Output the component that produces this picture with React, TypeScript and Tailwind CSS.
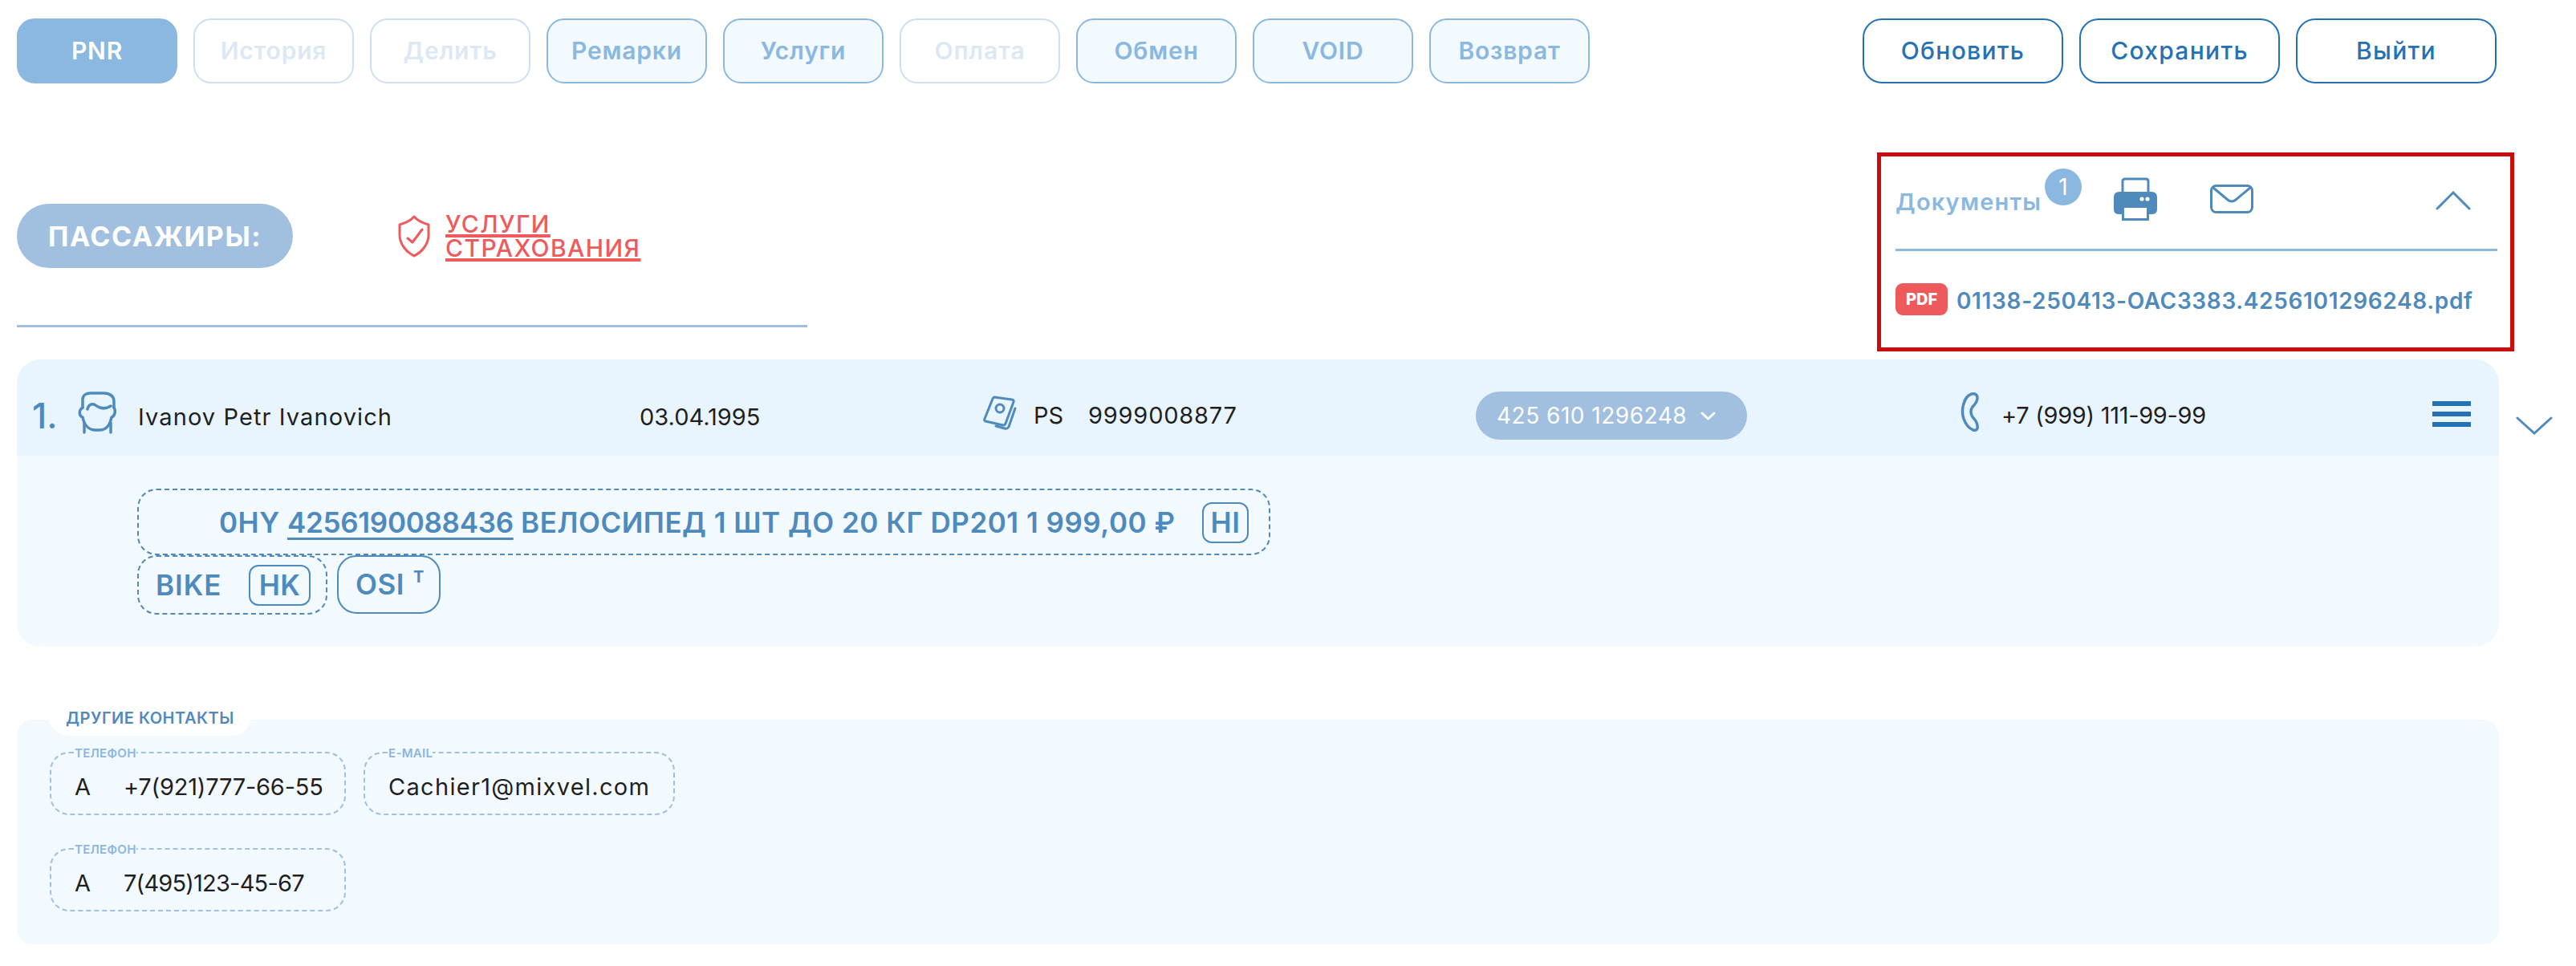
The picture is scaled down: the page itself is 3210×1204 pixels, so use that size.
import React from "react";

const navItems: { label: string; kind: "active" | "off" | "on" }[] = [
  { label: "PNR", kind: "active" },
  { label: "История", kind: "off" },
  { label: "Делить", kind: "off" },
  { label: "Ремарки", kind: "on" },
  { label: "Услуги", kind: "on" },
  { label: "Оплата", kind: "off" },
  { label: "Обмен", kind: "on" },
  { label: "VOID", kind: "on" },
  { label: "Возврат", kind: "on" },
];

function NavButton({ label, kind }: { label: string; kind: "active" | "off" | "on" }) {
  const cls =
    kind === "active"
      ? "bg-[#8bb8e0] border-[#8bb8e0] text-white"
      : kind === "off"
        ? "bg-white border-[#cddff0] text-[#dce9f5]"
        : "bg-[#f2f9ff] border-[#8bb8e0] text-[#8bb8e0]";
  return (
    <div className={`w-[200px] h-[81px] rounded-[22px] border-2 flex items-center justify-center text-[30px] font-semibold tracking-[0.8px] ${cls}`}>
      {label}
    </div>
  );
}

function ActionButton({ label }: { label: string }) {
  return (
    <div className="w-[250px] h-[81px] rounded-[24px] border-2 border-[#2472b5] flex items-center justify-center text-[30px] tracking-[1.3px] font-medium text-[#2472b5] bg-white">
      {label}
    </div>
  );
}

function ContactBox({ label, width, children }: { label: string; width: string; children: React.ReactNode }) {
  return (
    <div className={`relative h-[79px] rounded-[24px] border-2 border-dashed border-[#a1bfdf] flex items-center pl-[29px] pt-[8px] text-[29px] text-[#1f1f1f] ${width}`}>
      <span className="absolute left-[29px] top-[-8px] bg-[#f2f9ff] text-[15px] leading-[16px] tracking-[0.3px] font-semibold text-[#8ab6df]">{label}</span>
      {children}
    </div>
  );
}

export default function App() {
  return (
    <div className="relative w-[3210px] h-[1204px] overflow-hidden bg-white font-['Inter',sans-serif]">
      {/* top bar */}
      <div className="h-[190px] pt-[23px] pl-[21px] pr-[99px] flex items-start justify-between">
        <div className="flex gap-[20px]">
          {navItems.map((n) => (
            <NavButton key={n.label} label={n.label} kind={n.kind} />
          ))}
        </div>
        <div className="flex gap-[20px]">
          <ActionButton label="Обновить" />
          <ActionButton label="Сохранить" />
          <ActionButton label="Выйти" />
        </div>
      </div>

      {/* passengers + documents */}
      <div className="h-[258px] flex items-start pl-[21px] pr-[77px] justify-between">
        <div className="w-[985px] pt-[64px]">
          <div className="flex items-center h-[80px]">
            <div className="w-[344px] h-[80px] rounded-full bg-[#a1bfdf] flex items-center justify-center text-white text-[34px] tracking-[1.5px] font-bold">
              ПАССАЖИРЫ:
            </div>
            <svg className="ml-[131px]" width="40" height="53" viewBox="0 0 40 53" fill="none" stroke="#ef5a5d" strokeWidth="3">
              <path d="M20 2 C15 8 9 10 2 12 V25 C2 36 10 46 20 51 C30 46 38 36 38 25 V12 C31 10 25 8 20 2 Z" strokeLinejoin="round" />
              <path d="M12 29 L18 34 L30 18" strokeLinecap="round" strokeLinejoin="round" />
            </svg>
            <div className="ml-[19px] text-[#ef5a5d] text-[30px] tracking-[1.4px] leading-[30px] font-medium underline underline-offset-[2px] decoration-[4px]">
              УСЛУГИ
              <br />
              СТРАХОВАНИЯ
            </div>
          </div>
          <div className="mt-[71px] h-[3px] bg-[#a1bfdf]" />
        </div>

        <div className="w-[794px] h-[248px] border-[5px] border-[#cc0c0c] pl-[18px] pr-[16px] bg-white">
          <div className="relative h-[118px] border-b-[3px] border-[#8bb8e0]">
            <span className="absolute left-0 top-[37px] text-[29px] tracking-[1.2px] leading-[40px] font-semibold text-[#8bb8e0]">Документы</span>
            <span className="absolute left-[186px] top-[15px] w-[46px] h-[46px] rounded-full bg-[#8bb8e0] flex items-center justify-center text-white text-[28px]">1</span>
            <svg className="absolute left-[272px] top-[26px]" width="54" height="54" viewBox="0 0 54 54">
              <path d="M11 19 V5 Q11 2 14 2 H40 Q43 2 43 5 V19" fill="none" stroke="#4f8abd" strokeWidth="3" />
              <path d="M7 18 H47 Q54 18 54 25 V40 Q54 46 47 46 H43 V36 H11 V46 H7 Q0 46 0 40 V25 Q0 18 7 18 Z" fill="#4f8abd" />
              <rect x="11.5" y="36.5" width="31" height="16" fill="#fff" stroke="#4f8abd" strokeWidth="3" />
              <circle cx="35" cy="27" r="2.6" fill="#fff" />
              <circle cx="42" cy="27" r="2.6" fill="#fff" />
            </svg>
            <svg className="absolute left-[392px] top-[35px]" width="54" height="36" viewBox="0 0 54 36" fill="none" stroke="#4f8abd" strokeWidth="3">
              <rect x="1.5" y="1.5" width="51" height="33" rx="6" />
              <path d="M4 4 L22 19 Q27 23 32 19 L50 4" strokeLinecap="round" />
            </svg>
            <svg className="absolute left-[673px] top-[43px]" width="44" height="24" viewBox="0 0 44 24" fill="none" stroke="#4f8abd" strokeWidth="3">
              <path d="M2 22 L22 2 L42 22" strokeLinecap="round" />
            </svg>
          </div>
          <div className="flex items-center mt-[40px] h-[40px]">
            <span className="w-[65px] h-[40px] rounded-[9px] bg-[#ee5a5c] flex items-center justify-center text-white text-[20px] font-extrabold">PDF</span>
            <span className="ml-[11px] pt-[3px] text-[#4f8abd] text-[28px] tracking-[0.65px] font-semibold whitespace-nowrap">01138-250413-OAC3383.4256101296248.pdf</span>
          </div>
        </div>
      </div>

      {/* passenger card */}
      <div className="flex items-start pl-[21px]">
        <div className="w-[3093px] rounded-[30px] overflow-hidden bg-[#f2f9ff]">
          <div className="h-[120px] bg-[#e8f5ff] flex items-center pl-[19px] pt-[20px] text-[29px] text-[#1f1f1f]">
            <span className="w-[57px] text-[44px] font-medium text-[#4f8abd]">1.</span>
            <span className="w-[75px] -mt-[8px]">
              <svg width="48" height="53" viewBox="0 0 48 53" fill="none" stroke="#4f8abd" strokeWidth="3.5" strokeLinecap="round" strokeLinejoin="round">
                <path d="M6 20 V10 C6 5 10 2 16 2 H32 C40 2 45 6 45 12 V20" />
                <path d="M12 22 C13 17 17 14 22 17 C27 21 33 23 41 18" />
                <path d="M6 20 C1 23 1 30 6 32 C8 42 14 48 22 48 H27 C35 48 40 42 42 32 C47 30 47 23 45 20" />
                <path d="M8 39 V51 M41 39 V51" />
              </svg>
            </span>
            <span className="w-[625px] pt-[3px] tracking-[1.1px]">Ivanov Petr Ivanovich</span>
            <span className="w-[428px] pt-[3px]">03.04.1995</span>
            <span className="w-[63px] -mt-[8px]">
              <svg width="42" height="43" viewBox="0 0 42 43" fill="none" stroke="#4f8abd" strokeWidth="3" strokeLinecap="round" strokeLinejoin="round">
                <path d="M14 2 L36 5 Q39 6 38 8 L28 35 Q27 37 25 37 L3 32 Q1 31 2 29 L12 4 Q13 2 14 2 Z" />
                <circle cx="21" cy="16" r="5" />
                <path d="M40 16 L32 39 Q30 42 27 41 L16 38" />
              </svg>
            </span>
            <span className="w-[68px]">PS</span>
            <span className="w-[483px] tracking-[0.8px]">9999008877</span>
            <span className="w-[338px] h-[60px] rounded-full bg-[#a1bfdf] flex items-center pl-[26px] text-white text-[28px] tracking-[0.5px]">
              425 610 1296248
              <svg className="ml-[17px]" width="19" height="11" viewBox="0 0 19 11" fill="none" stroke="#fff" strokeWidth="3" strokeLinecap="round" strokeLinejoin="round">
                <path d="M2 2 L9.5 9 L17 2" />
              </svg>
            </span>
            <span className="w-[266px]" />
            <span className="w-[51px] -mt-[8px]">
              <svg width="23" height="50" viewBox="0 0 23 50" fill="none" stroke="#4f8abd" strokeWidth="3.5" strokeLinejoin="round">
                <path d="M14 2 Q21 1 21 7 Q21 11 17 16 Q13 19 13 24 Q13 29 17 33 Q22 39 21 45 Q20 48 16 47 Q8 44 4 33 Q1 24 4 14 Q7 4 14 2 Z" />
              </svg>
            </span>
            <span className="w-[537px] whitespace-nowrap tracking-[-0.3px]">+7 (999) 111-99-99</span>
            <span className="w-[48px] flex flex-col gap-[7px] mt-[-4px]">
              <span className="h-[6px] bg-[#2472b5]" />
              <span className="h-[6px] bg-[#2472b5]" />
              <span className="h-[6px] bg-[#2472b5]" />
            </span>
          </div>
          <div className="pl-[150px] pt-[41px] pb-[40px] text-[#4f8abd] font-semibold text-[35px] tracking-[0.5px]">
            <div className="w-[1412px] h-[83px] rounded-[24px] border-2 border-dashed border-[#4f8abd] flex items-center pl-[100px] pt-[2px] whitespace-nowrap">
              <span>0HY&nbsp;</span>
              <span className="underline underline-offset-[6px] decoration-[3px] tracking-[-0.3px]">4256190088436</span>
              <span>&nbsp;ВЕЛОСИПЕД 1 ШТ ДО 20 КГ DP201 1 999,00 ₽</span>
              <span className="ml-auto mr-[25px] w-[58px] h-[51px] rounded-[12px] border-2 border-[#4f8abd] flex items-center justify-center">HI</span>
            </div>
            <div className="flex gap-[12px]">
              <div className="w-[237px] h-[74px] rounded-[24px] border-2 border-dashed border-[#4f8abd] flex items-center pl-[21px]">
                <span className="w-[116px] tracking-[1px]">BIKE</span>
                <span className="w-[77px] h-[51px] rounded-[12px] border-2 border-[#4f8abd] flex items-center justify-center">HK</span>
              </div>
              <div className="relative w-[129px] h-[73px] rounded-[24px] border-2 border-[#4f8abd] flex items-center pl-[21px]">
                <span>OSI</span>
                <span className="absolute left-[93px] top-[15px] text-[20px] leading-[20px] font-bold">T</span>
              </div>
            </div>
          </div>
        </div>
        <svg className="ml-[21px] mt-[71px]" width="46" height="23" viewBox="0 0 46 23" fill="none" stroke="#4f8abd" strokeWidth="3">
          <path d="M2 2 L23 21 L44 2" strokeLinecap="round" />
        </svg>
      </div>

      {/* other contacts */}
      <div className="relative ml-[21px] mt-[91px] w-[3093px] rounded-[20px] bg-[#f2f9ff] pt-[40px] pl-[41px] pb-[41px]">
        <div className="absolute left-[40px] top-[-20px] w-[252px] h-[40px] pb-[5px] rounded-b-[24px] bg-white flex items-center justify-center text-[20px] tracking-[0.5px] font-semibold text-[#4f8abd] whitespace-nowrap">
          ДРУГИЕ КОНТАКТЫ
        </div>
        <div className="flex gap-[22px]">
          <ContactBox label="ТЕЛЕФОН" width="w-[369px]">
            <span className="w-[61px]">A</span>
            <span className="tracking-[-0.2px]">+7(921)777-66-55</span>
          </ContactBox>
          <ContactBox label="E-MAIL" width="w-[388px]">
            <span className="tracking-[1.3px]">Cachier1@mixvel.com</span>
          </ContactBox>
        </div>
        <div className="mt-[41px]">
          <ContactBox label="ТЕЛЕФОН" width="w-[369px]">
            <span className="w-[61px]">A</span>
            <span className="tracking-[-0.8px]">7(495)123-45-67</span>
          </ContactBox>
        </div>
      </div>
    </div>
  );
}
